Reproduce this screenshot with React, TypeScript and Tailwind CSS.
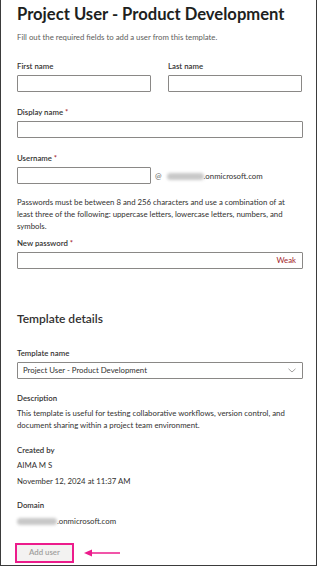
import React from "react";

const Label = ({ children, req }: { children: React.ReactNode; req?: boolean }) => (
  <div className="text-[7.8px] leading-[12px] font-semibold text-[#323130] mb-[3px]">
    {children}
    {req && <span className="text-[#a4262c]"> *</span>}
  </div>
);

const Input = ({ className = "" }: { className?: string }) => (
  <div className={"h-[17px] border border-[#8a8886] rounded-[1px] bg-white " + className} />
);

const Blur = ({ w }: { w: number }) => (
  <span
    className="inline-block h-[7px] bg-[#c8c8c8] blur-[1.5px] rounded-sm align-middle"
    style={{ width: w }}
  />
);

export default function App() {
  return (
    <div
      className="w-[317px] h-[566px] bg-white border-l border-r border-b border-[#3b3b3b] pl-[16px] pr-[13px] overflow-hidden"
      style={{ fontFamily: 'Lato, "Open Sans", sans-serif' }}
    >
      <div className="pt-[2px] text-[16.6px] leading-[24px] font-bold text-[#201f1e] whitespace-nowrap">
        Project User - Product Development
      </div>
      <div className="mt-[5px] text-[7.8px] leading-[12px] text-[#605e5c]">
        Fill out the required fields to add a user from this template.
      </div>

      <div className="mt-[17px] flex gap-[17px]">
        <div className="w-[134px]">
          <Label>First name</Label>
          <Input />
        </div>
        <div className="w-[134px]">
          <Label>Last name</Label>
          <Input />
        </div>
      </div>

      <div className="mt-[14px]">
        <Label req>Display name</Label>
        <Input />
      </div>

      <div className="mt-[14px]">
        <Label req>Username</Label>
        <div className="flex items-center">
          <Input className="w-[134px]" />
          <span className="ml-[4px] text-[7.8px] leading-[12px] text-[#605e5c] flex items-center">
            @<span className="ml-[5px]"><Blur w={37} /></span>
            <span className="text-[#323130]">.onmicrosoft.com</span>
          </span>
        </div>
      </div>

      <div className="mt-[12px] text-[7.8px] leading-[12px] text-[#323130] whitespace-nowrap">
        Passwords must be between 8 and 256 characters and use a combination of at
        <br />
        least three of the following: uppercase letters, lowercase letters, numbers, and
        <br />
        symbols.
      </div>

      <div className="mt-[5px]">
        <Label req>New password</Label>
        <div className="h-[17px] border border-[#8a8886] rounded-[1px] flex items-center justify-end pr-[6px]">
          <span className="text-[7.8px] text-[#a4262c]">Weak</span>
        </div>
      </div>

      <div className="mt-[42px] text-[12px] leading-[16px] font-semibold text-[#323130]">
        Template details
      </div>

      <div className="mt-[20px]">
        <Label>Template name</Label>
        <div className="h-[17px] border border-[#8a8886] rounded-[1px] flex items-center justify-between pl-[5px] pr-[6px]">
          <span className="text-[7.8px] text-[#323130]">Project User - Product Development</span>
          <svg width="8" height="5" viewBox="0 0 8 5" fill="none">
            <path d="M0.5 0.8 L4 4 L7.5 0.8" stroke="#8a8886" strokeWidth="0.8" />
          </svg>
        </div>
      </div>

      <div className="mt-[13px] text-[7.8px] leading-[12px] font-semibold text-[#323130]">Description</div>
      <div className="mt-[3px] text-[7.8px] leading-[12px] text-[#323130] whitespace-nowrap">
        This template is useful for testing collaborative workflows, version control, and
        <br />
        document sharing within a project team environment.
      </div>

      <div className="mt-[13px] text-[7.8px] leading-[12px] font-semibold text-[#323130]">Created by</div>
      <div className="mt-[3px] text-[7.8px] leading-[12px] text-[#323130]">AIMA M S</div>
      <div className="mt-[4px] text-[7.8px] leading-[12px] text-[#323130]">
        November 12, 2024 at 11:37 AM
      </div>

      <div className="mt-[12px] text-[7.8px] leading-[12px] font-semibold text-[#323130]">Domain</div>
      <div className="mt-[4px] text-[7.8px] leading-[12px] text-[#323130] flex items-center">
        <Blur w={40} />
        <span>.onmicrosoft.com</span>
      </div>

      <div className="mt-[16px] flex items-center -ml-[2px]">
        <div className="w-[59px] h-[20px] border-2 border-[#ec1c8c] bg-[#f3f2f1] flex items-center justify-center">
          <span className="text-[7.8px] font-semibold text-[#a19f9d]">Add user</span>
        </div>
        <svg className="ml-[10px]" width="38" height="10" viewBox="0 0 38 10">
          <line x1="4" y1="5" x2="36" y2="5" stroke="#ec1c8c" strokeWidth="1.5" />
          <path d="M0 5 L8 1.5 L8 8.5 Z" fill="#ec1c8c" />
        </svg>
      </div>
    </div>
  );
}
